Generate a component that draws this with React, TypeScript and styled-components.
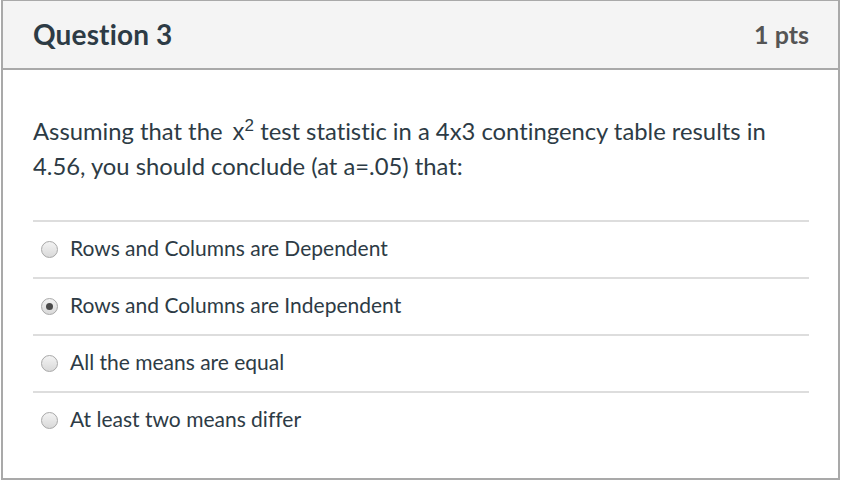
import React from 'react';
import styled, { createGlobalStyle } from 'styled-components';

const GlobalStyle = createGlobalStyle`
	html, body {
		margin: 0;
		padding: 0;
		background: #ffffff;
	}
	body {
		font-family: Lato, 'Open Sans', sans-serif;
		font-variant-ligatures: none;
		color: #2d3b45;
	}
`;

const Card = styled.div`
	box-sizing: border-box;
	margin-left: 1px;
	width: 839px;
	height: 480px;
	border: 2px solid #a9a9a9;
	border-top-width: 1px;
	background: #ffffff;
`;

const Header = styled.div`
	box-sizing: border-box;
	height: 69px;
	display: flex;
	align-items: center;
	justify-content: space-between;
	padding: 0 29px 2px 30px;
	background: #f4f4f4;
	border-bottom: 2px solid #a9a9a9;
`;

const Title = styled.h2`
	margin: 0;
	font-size: 28px;
	font-weight: 700;
	letter-spacing: 0.15px;
	color: #2d3b45;
`;

const Points = styled.span`
	font-size: 25px;
	font-weight: 700;
	color: #555555;
`;

const Body = styled.div`
	padding: 44px 29px 0 30px;
`;

const Prompt = styled.p`
	margin: 0 0 36px;
	font-size: 23.8px;
	line-height: 35px;
	color: #2d3b45;
`;

const Chi = styled.span`
	font-family: 'Liberation Sans', Arial, sans-serif;
	font-size: 24px;
	margin-left: 4px;
	sup {
		font-size: 17px;
		vertical-align: 9px;
		line-height: 0;
	}
`;

const OptionList = styled.ul`
	list-style: none;
	margin: 0;
	padding: 0;
`;

const OptionRow = styled.li`
	box-sizing: border-box;
	height: 57px;
	display: flex;
	align-items: center;
	gap: 12px;
	padding: 0 0 0 8px;
	border-top: 2px solid #dddddd;
	font-size: 21px;
	color: #2d3b45;
`;

const Label = styled.span`
	margin-top: -5px;
`;

const Radio = styled.span<{ $checked?: boolean }>`
	box-sizing: border-box;
	flex: none;
	width: 17px;
	height: 17px;
	border-radius: 50%;
	border: 1px solid #a8a8a8;
	background: linear-gradient(#f3f3f3, #d9d9d9);
	display: flex;
	align-items: center;
	justify-content: center;
	&::after {
		content: '';
		display: ${(p) => (p.$checked ? 'block' : 'none')};
		width: 7px;
		height: 7px;
		border-radius: 50%;
		background: #4a4a4a;
	}
`;

const options = [
	{ label: 'Rows and Columns are Dependent', checked: false },
	{ label: 'Rows and Columns are Independent', checked: true },
	{ label: 'All the means are equal', checked: false },
	{ label: 'At least two means differ', checked: false }
];

const App = () => {
	return (
		<>
			<GlobalStyle />
			<Card>
				<Header>
					<Title>Question 3</Title>
					<Points>1 pts</Points>
				</Header>
				<Body>
					<Prompt>
						Assuming that the{' '}
						<Chi>
							x<sup>2</sup>
						</Chi>{' '}
						test statistic in a 4x3 contingency table results in 4.56, you should conclude (at a=.05) that:
					</Prompt>
					<OptionList>
						{options.map((opt) => (
							<OptionRow key={opt.label}>
								<Radio $checked={opt.checked} />
								<Label>{opt.label}</Label>
							</OptionRow>
						))}
					</OptionList>
				</Body>
			</Card>
		</>
	);
};

export default App;
